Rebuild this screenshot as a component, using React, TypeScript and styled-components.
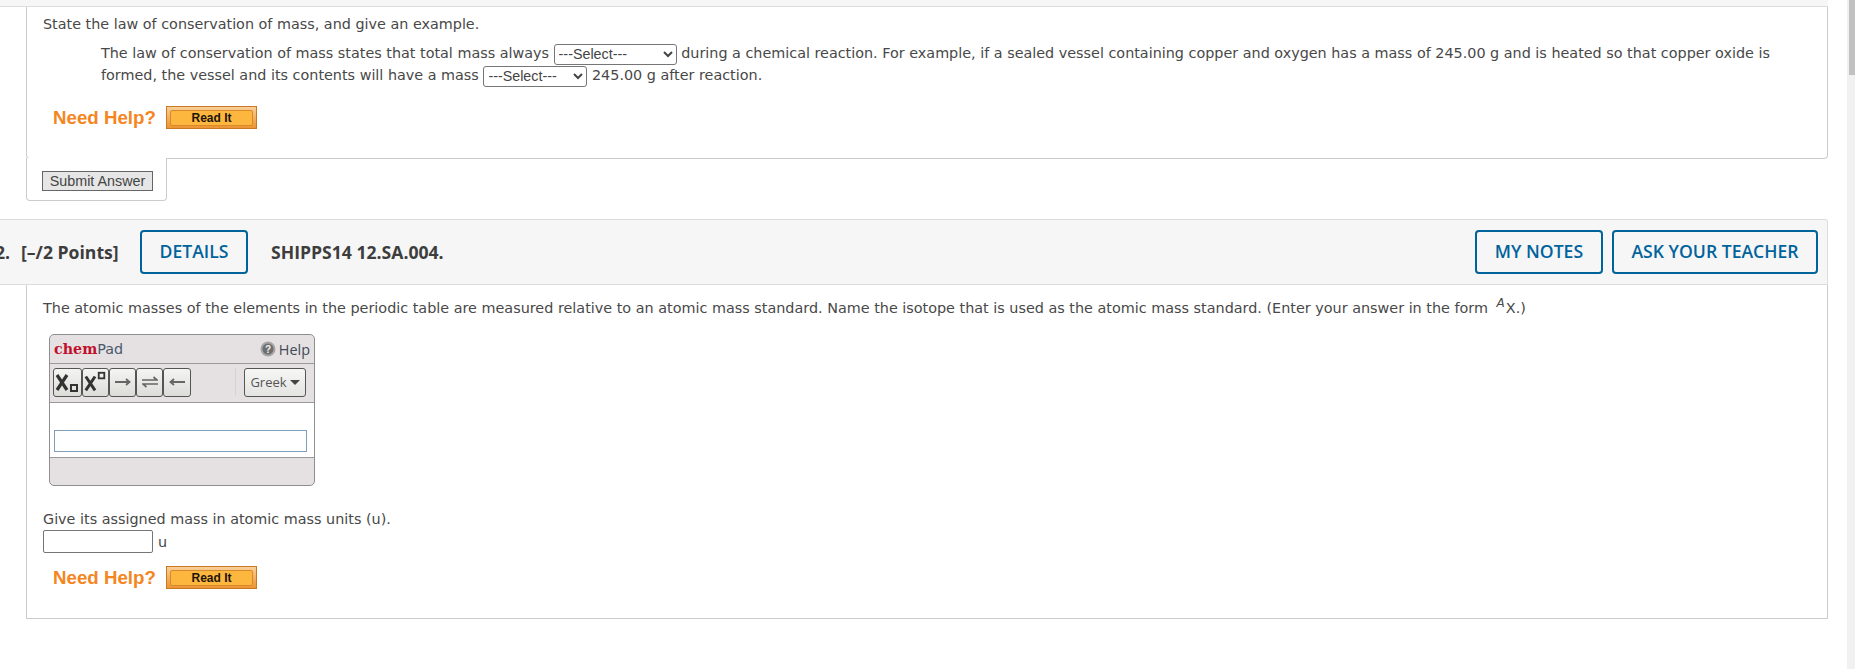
import React from "react";
import styled, { createGlobalStyle } from "styled-components";

const GlobalStyle = createGlobalStyle`
	html, body {
		margin: 0;
		padding: 0;
		height: 100%;
		overflow: hidden;
		background: #fff;
	}
	body {
		font-family: "DejaVu Sans", Verdana, sans-serif;
		font-size: 14.36px;
		color: #484848;
	}
`;

const Page = styled.div`
	display: flex;
	height: 669px;
	overflow: hidden;
`;

const Content = styled.main`
	width: 1828px;
	flex: none;
`;

const Gutter = styled.div`
	width: 19px;
	flex: none;
`;

const ScrollTrack = styled.div`
	width: 8px;
	flex: none;
	display: flex;
	justify-content: flex-end;
	background: #f1f1f1;
`;

const ScrollThumb = styled.div`
	width: 6px;
	height: 75px;
	background: #c1c1c1;
`;

const TopStrip = styled.div`
	height: 6px;
	background: #f6f6f6;
	border-bottom: 1px solid #ddd;
`;

const QuestionBody = styled.section<{ $height: number; $radius?: boolean }>`
	box-sizing: border-box;
	height: ${(p) => p.$height}px;
	margin-left: 26px;
	padding-left: 16px;
	border: 1px solid #ccc;
	border-top: none;
	border-bottom-right-radius: ${(p) => (p.$radius ? 4 : 0)}px;
	border-bottom-left-radius: ${(p) => (p.$radius ? 4 : 0)}px;
`;

const Prompt = styled.p`
	margin: 0;
	padding-top: 7px;
	line-height: 20px;
`;

const Answer = styled.p`
	margin: 8px 0 0 58px;
	line-height: 22px;
	width: 1690px;
`;

const NativeSelect = styled.select<{ $width: number }>`
	box-sizing: border-box;
	width: ${(p) => p.$width}px;
	height: 21px;
	margin: -2px 0;
	padding: 0;
	vertical-align: middle;
	font-family: "Liberation Sans", Arial, sans-serif;
	font-size: 14.3px;
	color: #444;
	background: #fff;
	border: 1px solid #767676;
	border-radius: 3px;
`;

const HelpRow = styled.div<{ $top: number }>`
	display: flex;
	align-items: center;
	height: 23px;
	margin: ${(p) => p.$top}px 0 0 10px;
`;

const NeedHelp = styled.span`
	width: 113px;
	font-family: "Liberation Sans", Arial, sans-serif;
	font-size: 18.7px;
	font-weight: bold;
	color: #f5861f;
`;

const ReadIt = styled.button`
	box-sizing: border-box;
	width: 91px;
	height: 23px;
	padding: 3px 3px 2px;
	border: 1px solid #c87a22;
	background: linear-gradient(#f9cf98, #ec9433);
	cursor: pointer;
`;

const ReadItFace = styled.span`
	display: block;
	height: 16px;
	line-height: 15px;
	box-sizing: border-box;
	border: 1px solid #d8892a;
	border-radius: 2px;
	background: #fdb73f;
	font-family: "Liberation Sans", Arial, sans-serif;
	font-size: 12px;
	font-weight: bold;
	color: #1c1408;
`;

const SubmitTab = styled.div`
	position: relative;
	box-sizing: border-box;
	width: 141px;
	height: 43px;
	margin: -1px 0 0 26px;
	padding: 13px 0 0 15px;
	background: #fff;
	border: 1px solid #ccc;
	border-top: none;
	border-radius: 0 0 4px 4px;
`;

const SubmitButton = styled.button`
	display: block;
	box-sizing: border-box;
	width: 111px;
	height: 20px;
	padding: 0;
	font-family: "Liberation Sans", Arial, sans-serif;
	font-size: 14.3px;
	line-height: 17px;
	color: #444;
	background: #e6e6e6;
	border: 1px solid #666;
`;

const QuestionHeader = styled.header`
	box-sizing: border-box;
	display: flex;
	align-items: center;
	height: 66px;
	margin-top: 18px;
	padding-right: 9px;
	overflow: hidden;
	background: #f6f6f6;
	border: 1px solid #ddd;
	border-left: none;
	border-top-right-radius: 3px;
	font-family: "Open Sans", sans-serif;
	font-size: 17.6px;
	font-weight: 700;
	color: #3d3d3d;
`;

const QuestionNumber = styled.span`
	flex: none;
	width: 13px;
	margin: 0 13px 0 -5px;
`;

const Points = styled.span`
	flex: none;
	width: 119px;
`;

const Reference = styled.span`
	margin: 0 auto 0 23px;
`;

const OutlineButton = styled.button<{ $width: number; $gap?: number }>`
	box-sizing: border-box;
	flex: none;
	width: ${(p) => p.$width}px;
	height: 44px;
	margin-left: ${(p) => p.$gap ?? 0}px;
	padding: 0 0 2px;
	font-family: "Open Sans", sans-serif;
	font-size: 17.6px;
	font-weight: 600;
	color: #00639c;
	background: transparent;
	border: 2px solid #00639c;
	border-radius: 4px;
`;

const Question = styled.p`
	margin: 0;
	padding-top: 13px;
	font-size: 14.39px;
	line-height: 20px;
`;

const IsotopeMark = styled.sup`
	font-style: italic;
	font-size: 12px;
	line-height: 0;
	margin: 0 1px 0 4px;
`;

const ChemPad = styled.div`
	box-sizing: border-box;
	width: 266px;
	height: 152px;
	margin: 16px 0 0 6px;
	border: 1px solid #8f8f8f;
	border-radius: 5px;
	overflow: hidden;
	background: #e5e1e3;
`;

const PadTitleBar = styled.div`
	box-sizing: border-box;
	display: flex;
	align-items: center;
	justify-content: space-between;
	height: 29px;
	padding: 0 4px;
	border-bottom: 1px solid #9a9a9a;
`;

const PadTitle = styled.span`
	font-size: 14.3px;
	color: #4a5a6a;
`;

const PadBrand = styled.b`
	font-family: "DejaVu Serif", serif;
	font-size: 14.3px;
	color: #c0102c;
`;

const PadHelp = styled.span`
	display: flex;
	align-items: center;
	gap: 3px;
	font-family: "Open Sans", sans-serif;
	font-size: 14.4px;
	color: #3f4a55;
`;

const PadToolbar = styled.div`
	box-sizing: border-box;
	display: flex;
	align-items: center;
	height: 39px;
	padding: 0 8px 2px 3px;
	border-bottom: 1px solid #9a9a9a;
`;

const ToolButton = styled.button<{ $width: number }>`
	box-sizing: border-box;
	display: flex;
	align-items: center;
	justify-content: center;
	width: ${(p) => p.$width}px;
	height: 29px;
	padding: 0;
	border: 1px solid #555;
	border-radius: 3px;
	background: linear-gradient(#f4f4f2, #dcdcd8);
`;

const ToolDivider = styled.span`
	width: 1px;
	height: 28px;
	margin: 0 8px 0 auto;
	background: #d6d3d4;
`;

const GreekButton = styled.button`
	box-sizing: border-box;
	display: flex;
	align-items: center;
	justify-content: center;
	gap: 3px;
	width: 62px;
	height: 29px;
	padding: 0;
	font-family: "Open Sans", sans-serif;
	font-size: 13px;
	color: #555;
	border: 1px solid #555;
	border-radius: 3px;
	background: linear-gradient(#f6f6f5, #e4e4e2);
`;

const Caret = styled.span`
	width: 0;
	height: 0;
	border-left: 5px solid transparent;
	border-right: 5px solid transparent;
	border-top: 5px solid #444;
`;

const PadEditor = styled.div`
	box-sizing: border-box;
	height: 55px;
	padding: 27px 7px 0 4px;
	background: #fff;
	border-bottom: 1px solid #9a9a9a;
`;

const PadInput = styled.input`
	display: block;
	box-sizing: border-box;
	width: 100%;
	height: 22px;
	padding: 0;
	border: 1px solid #7f9fbd;
	outline: none;
	background: #fff;
`;

const MassLabel = styled.p`
	margin: 23px 0 0;
	line-height: 20px;
`;

const MassRow = styled.div`
	display: flex;
	align-items: center;
	gap: 5px;
	margin-top: 1px;
`;

const MassInput = styled.input`
	box-sizing: border-box;
	width: 110px;
	height: 23px;
	padding: 0;
	border: 1px solid #767676;
	border-radius: 2px;
	background: #fff;
`;

const SubscriptIcon = () => (
	<svg width="27" height="25" viewBox="0 0 27 25" fill="none" stroke="#333">
		<path d="M3 5 L13 20 M13 5 L3 20" strokeWidth="3.2" />
		<rect x="17" y="15" width="6" height="6" strokeWidth="2" />
	</svg>
);

const SuperscriptIcon = () => (
	<svg width="27" height="25" viewBox="0 0 27 25" fill="none" stroke="#333">
		<path d="M3 6 L13 21 M13 6 L3 21" strokeWidth="3.2" />
		<rect x="17" y="2" width="6" height="6" strokeWidth="2" />
	</svg>
);

const ArrowRightIcon = () => (
	<svg width="16" height="12" viewBox="0 0 16 12" fill="none" stroke="#666" strokeWidth="1.8">
		<path d="M0 6 H14 M11 3 L14.5 6 L11 9" />
	</svg>
);

const ArrowLeftIcon = () => (
	<svg width="16" height="12" viewBox="0 0 16 12" fill="none" stroke="#666" strokeWidth="1.8">
		<path d="M16 6 H2 M5 3 L1.5 6 L5 9" />
	</svg>
);

const EquilibriumIcon = () => (
	<svg width="16" height="14" viewBox="0 0 16 14" fill="none" stroke="#666" strokeWidth="1.7">
		<path d="M0 5 H15 L11.5 2 M16 9 H1 L4.5 12" />
	</svg>
);

const HelpBadge = () => (
	<svg width="16" height="16" viewBox="0 0 16 16">
		<circle cx="8" cy="8" r="7.5" fill="#a5a5a5" />
		<circle cx="8" cy="8" r="5.5" fill="#6e6e6e" />
		<text x="8" y="11.5" textAnchor="middle" fontSize="10" fontWeight="bold" fontFamily="Liberation Sans, sans-serif" fill="#eee">?</text>
	</svg>
);

const HelpLine = ({ top }: { top: number }) => (
	<HelpRow $top={top}>
		<NeedHelp>Need Help?</NeedHelp>
		<ReadIt type="button"><ReadItFace>Read It</ReadItFace></ReadIt>
	</HelpRow>
);

export default function App() {
	return (
		<Page>
			<GlobalStyle />
			<Content>
				<TopStrip />
				<QuestionBody $height={152} $radius>
					<Prompt>State the law of conservation of mass, and give an example.</Prompt>
					<Answer>
						The law of conservation of mass states that total mass always{" "}
						<NativeSelect $width={123}><option>---Select---</option></NativeSelect>{" "}
						during a chemical reaction. For example, if a sealed vessel containing copper and oxygen has a mass of 245.00 g and is heated so that copper oxide is formed, the vessel and its contents will have a mass{" "}
						<NativeSelect $width={104}><option>---Select---</option></NativeSelect>{" "}
						245.00 g after reaction.
					</Answer>
					<HelpLine top={20} />
				</QuestionBody>
				<SubmitTab>
					<SubmitButton type="button">Submit Answer</SubmitButton>
				</SubmitTab>

				<QuestionHeader>
					<QuestionNumber>2.</QuestionNumber>
					<Points>[–/2 Points]</Points>
					<OutlineButton type="button" $width={108}>DETAILS</OutlineButton>
					<Reference>SHIPPS14 12.SA.004.</Reference>
					<OutlineButton type="button" $width={128}>MY NOTES</OutlineButton>
					<OutlineButton type="button" $width={206} $gap={9}>ASK YOUR TEACHER</OutlineButton>
				</QuestionHeader>
				<QuestionBody $height={334}>
					<Question>
						The atomic masses of the elements in the periodic table are measured relative to an atomic mass standard. Name the isotope that is used as the atomic mass standard. (Enter your answer in the form <IsotopeMark>A</IsotopeMark>X.)
					</Question>
					<ChemPad>
						<PadTitleBar>
							<PadTitle><PadBrand>chem</PadBrand>Pad</PadTitle>
							<PadHelp><HelpBadge />Help</PadHelp>
						</PadTitleBar>
						<PadToolbar>
							<ToolButton type="button" $width={29}><SubscriptIcon /></ToolButton>
							<ToolButton type="button" $width={27}><SuperscriptIcon /></ToolButton>
							<ToolButton type="button" $width={27}><ArrowRightIcon /></ToolButton>
							<ToolButton type="button" $width={27}><EquilibriumIcon /></ToolButton>
							<ToolButton type="button" $width={28}><ArrowLeftIcon /></ToolButton>
							<ToolDivider />
							<GreekButton type="button">Greek<Caret /></GreekButton>
						</PadToolbar>
						<PadEditor><PadInput /></PadEditor>
					</ChemPad>
					<MassLabel>Give its assigned mass in atomic mass units (u).</MassLabel>
					<MassRow>
						<MassInput />
						<span>u</span>
					</MassRow>
					<HelpLine top={13} />
				</QuestionBody>
			</Content>
			<Gutter />
			<ScrollTrack><ScrollThumb /></ScrollTrack>
		</Page>
	);
}
